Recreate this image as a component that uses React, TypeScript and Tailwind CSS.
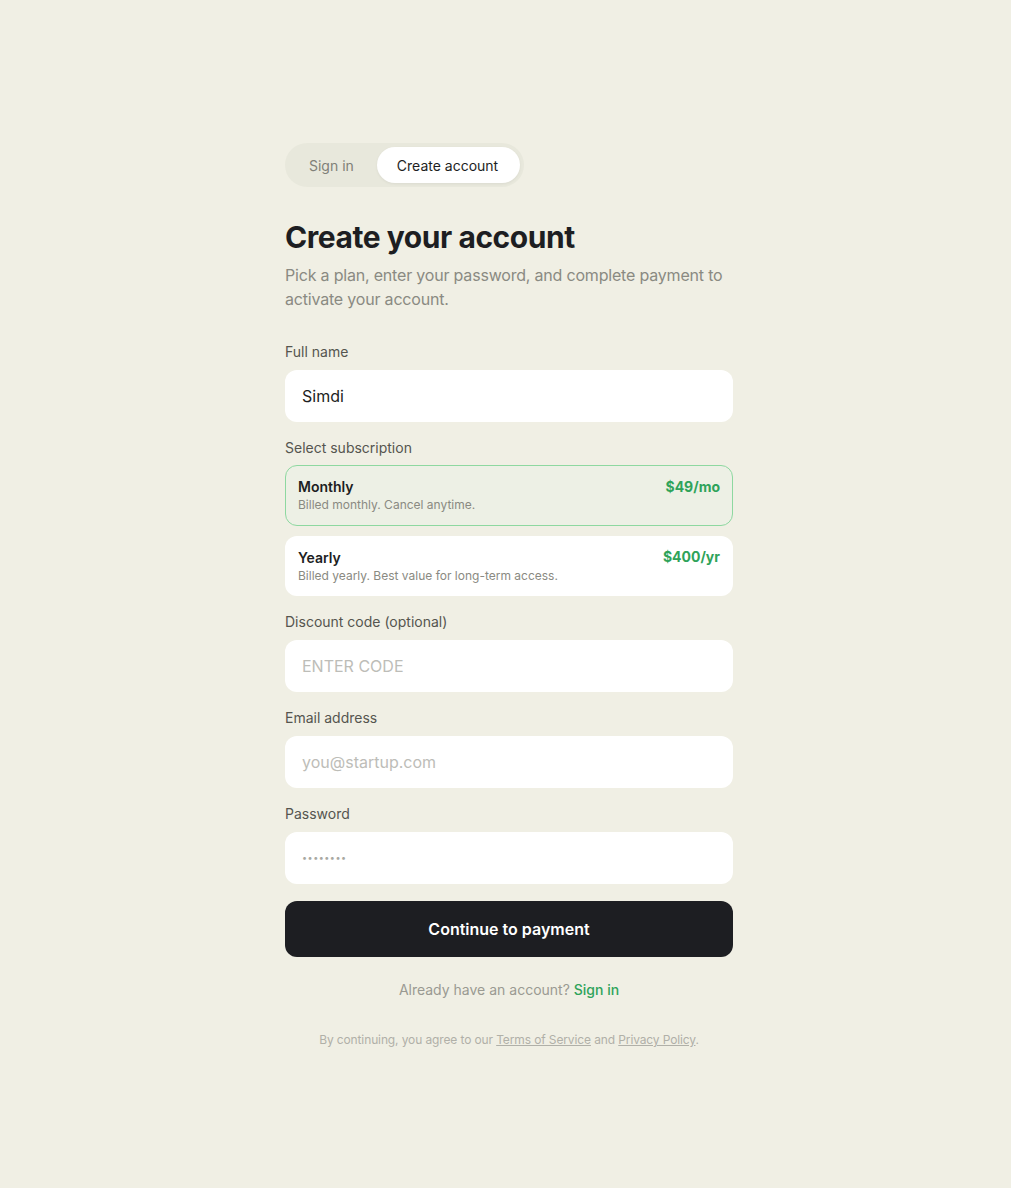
import React from "react";

export default function App() {
  const font = { fontFamily: "Inter, 'Noto Sans', sans-serif" };
  return (
    <div className="min-h-[1188px] w-full bg-[#f0efe4] text-[#1d1e22]" style={font}>
      <div className="flex justify-center pl-[7px] pt-[143px]">
        <div className="w-[448px] flex flex-col">
          <div className="flex w-fit rounded-full bg-[#e8e8dc] p-1">
            <button className="rounded-full pl-5 pr-[23px] h-9 text-[14px] text-[#808078]">Sign in</button>
            <button className="rounded-full pl-[20px] pr-[22px] h-9 text-[14px] bg-white text-[#1d1e22] shadow-[0_1px_3px_rgba(0,0,0,0.06)]">
              Create account
            </button>
          </div>

          <h1 className="mt-[32px] text-[30px] leading-[36px] font-bold tracking-[-0.015em] text-[#1d1e22]">
            Create your account
          </h1>
          <p className="mt-[8px] text-[16px] leading-[24px] tracking-[-0.012em] text-[#8a8a82]">
            Pick a plan, enter your password, and complete payment to activate your account.
          </p>

          <label className="mt-[31px] text-[14px] leading-[20px] text-[#55554f]">Full name</label>
          <div className="mt-2 h-[52px] rounded-xl bg-white flex items-center px-[17px] text-[16px] text-[#1d1e22]">
            Simdi
          </div>

          <label className="mt-4 text-[14px] leading-[20px] text-[#55554f]">Select subscription</label>
          <div className="mt-[7px] flex flex-col gap-[10px]">
            <div className="h-[61px] rounded-xl border border-[#8ed8a0] bg-[#edf0e5] px-[12px] flex items-center justify-between">
              <div className="flex flex-col">
                <span className="text-[14px] leading-[18px] font-semibold text-[#1d1e22]">Monthly</span>
                <span className="mt-[1px] text-[12px] leading-[16px] text-[#8a8a82]">Billed monthly. Cancel anytime.</span>
              </div>
              <span className="self-start mt-[12px] text-[14px] leading-[18px] font-bold text-[#2fa35a]">$49/mo</span>
            </div>
            <div className="h-[60px] rounded-xl bg-white px-[13px] flex items-center justify-between">
              <div className="flex flex-col">
                <span className="text-[14px] leading-[18px] font-semibold text-[#1d1e22]">Yearly</span>
                <span className="mt-[1px] text-[12px] leading-[16px] text-[#8a8a82]">Billed yearly. Best value for long-term access.</span>
              </div>
              <span className="self-start mt-[12px] text-[14px] leading-[18px] font-bold text-[#2fa35a]">$400/yr</span>
            </div>
          </div>

          <label className="mt-4 text-[14px] leading-[20px] text-[#55554f]">Discount code (optional)</label>
          <div className="mt-2 h-[52px] rounded-xl bg-white flex items-center px-[17px] text-[16px] text-[#bdbdb8]">
            ENTER CODE
          </div>

          <label className="mt-4 text-[14px] leading-[20px] text-[#55554f]">Email address</label>
          <div className="mt-2 h-[52px] rounded-xl bg-white flex items-center px-[17px] text-[16px] text-[#bdbdb8]">
            you@startup.com
          </div>

          <label className="mt-4 text-[14px] leading-[20px] text-[#55554f]">Password</label>
          <div className="mt-2 h-[52px] rounded-xl bg-white flex items-center px-[17px] text-[9px] tracking-[0.5px] text-[#a8a8a2]">
            ••••••••
          </div>

          <button className="mt-[17px] h-[56px] rounded-xl bg-[#1d1e22] text-white text-[16px] font-semibold">
            Continue to payment
          </button>

          <p className="mt-[23px] text-center text-[14px] leading-[20px] text-[#9a9a92]">
            Already have an account? <span className="text-[#2fa35a] font-medium">Sign in</span>
          </p>

          <p className="mt-[32px] text-center text-[12px] leading-[16px] tracking-[-0.01em] text-[#b0b0a8]">
            By continuing, you agree to our <span className="underline">Terms of Service</span> and{" "}
            <span className="underline">Privacy Policy</span>.
          </p>
        </div>
      </div>
    </div>
  );
}
